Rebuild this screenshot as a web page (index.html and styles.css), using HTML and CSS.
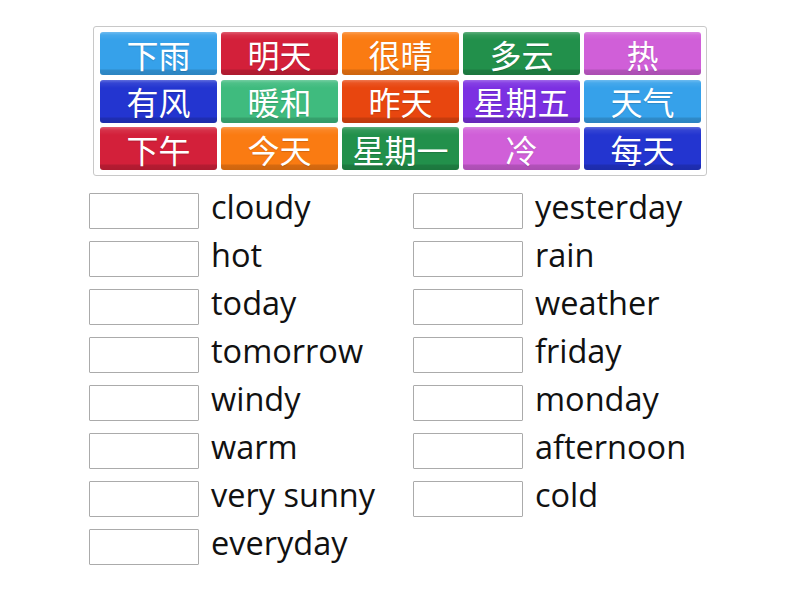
FILE: index.html
```html
<!DOCTYPE html>
<html lang="zh">
  <head>
    <meta charset="UTF-8" />
    <meta name="viewport" content="width=device-width, initial-scale=1.0" />
    <title>Weather Words Match</title>
    <link rel="stylesheet" href="styles.css">
  </head>
  <body>
    <div class="bank">
      <div class="tile sky">下雨</div>
      <div class="tile red">明天</div>
      <div class="tile orange">很晴</div>
      <div class="tile green">多云</div>
      <div class="tile pink">热</div>

      <div class="tile royal">有风</div>
      <div class="tile mint">暖和</div>
      <div class="tile flame">昨天</div>
      <div class="tile purple">星期五</div>
      <div class="tile sky">天气</div>

      <div class="tile red">下午</div>
      <div class="tile orange">今天</div>
      <div class="tile green">星期一</div>
      <div class="tile pink">冷</div>
      <div class="tile royal">每天</div>
    </div>

    <div class="answers">
      <div class="column">
        <div class="item"><div class="slot"></div><span>cloudy</span></div>
        <div class="item"><div class="slot"></div><span>hot</span></div>
        <div class="item"><div class="slot"></div><span>today</span></div>
        <div class="item"><div class="slot"></div><span>tomorrow</span></div>
        <div class="item"><div class="slot"></div><span>windy</span></div>
        <div class="item"><div class="slot"></div><span>warm</span></div>
        <div class="item"><div class="slot"></div><span>very sunny</span></div>
        <div class="item"><div class="slot"></div><span>everyday</span></div>
      </div>
      <div class="column">
        <div class="item"><div class="slot"></div><span>yesterday</span></div>
        <div class="item"><div class="slot"></div><span>rain</span></div>
        <div class="item"><div class="slot"></div><span>weather</span></div>
        <div class="item"><div class="slot"></div><span>friday</span></div>
        <div class="item"><div class="slot"></div><span>monday</span></div>
        <div class="item"><div class="slot"></div><span>afternoon</span></div>
        <div class="item"><div class="slot"></div><span>cold</span></div>
      </div>
    </div>
  </body>
</html>
```

FILE: styles.css
```css
body {
  margin: 0;
  padding: 26px 0 0;
  background-color: #ffffff;
  font-family: "Open Sans", "Noto Sans CJK SC", sans-serif;
  color: #111;
}

.bank {
  width: 600px;
  margin: 0 auto;
  padding: 5px 6px;
  border: 1px solid #c8c8c8;
  border-radius: 3px;
  display: grid;
  grid-template-columns: repeat(5, 117px);
  grid-auto-rows: 43px;
  column-gap: 4px;
  row-gap: 4.5px;
}

.tile {
  --base: #35a0e9;
  display: flex;
  align-items: center;
  justify-content: center;
  border-radius: 3px;
  color: #fff;
  font-family: "Noto Sans CJK SC", sans-serif;
  font-size: 32px;
  line-height: 1;
  background: linear-gradient(
    to bottom,
    rgba(255, 255, 255, 0.28) 0,
    rgba(255, 255, 255, 0.08) 3px,
    rgba(0, 0, 0, 0) 8px,
    rgba(0, 0, 0, 0) 37px,
    rgba(0, 0, 0, 0.14) 38px,
    rgba(0, 0, 0, 0.18) 100%
  ), var(--base);
  text-shadow: 0 1px 1px rgba(0, 0, 0, 0.15);
}

.sky { --base: #36a1ea; }
.red { --base: #d3203a; }
.orange { --base: #fa7b12; }
.green { --base: #22904b; }
.pink { --base: #d05fd8; }
.royal { --base: #2335d0; }
.mint { --base: #3fbb7e; }
.flame { --base: #e8460f; }
.purple { --base: #7c30e2; }

.answers {
  display: grid;
  grid-template-columns: 324px 324px;
  width: 648px;
  margin: 17px 0 0 89px;
}

.column {
  display: flex;
  flex-direction: column;
  gap: 12px;
}

.item {
  display: flex;
  align-items: center;
  gap: 12px;
  height: 36px;
}

.slot {
  width: 108px;
  height: 34px;
  border: 1px solid #ababab;
  border-radius: 1px;
  flex-shrink: 0;
}

.item span {
  font-size: 32.5px;
  line-height: 36px;
  padding-bottom: 8px;
  white-space: nowrap;
}
```
